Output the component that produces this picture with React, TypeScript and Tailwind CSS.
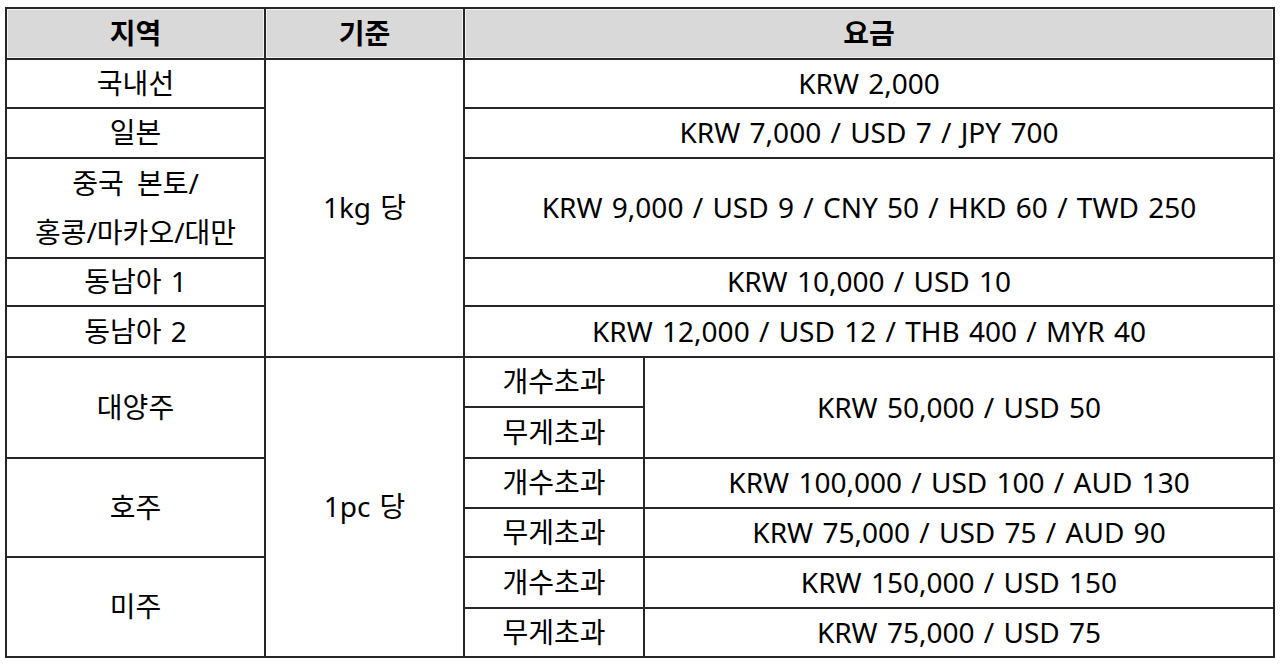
import React from "react";

const font = { fontFamily: '"Noto Sans", "Noto Sans CJK KR", sans-serif' };

export default function App() {
  const td = "border-2 border-[#262626] text-center align-middle p-0";
  return (
    <div className="w-[1280px] h-[664px] bg-white pl-[5px] pt-[7px] overflow-hidden" style={font}>
      <table className="table-fixed border-collapse w-[1268px] text-[28px] text-black leading-[1.2] [word-spacing:2px]">
        <colgroup>
          <col className="w-[259px]" />
          <col className="w-[199px]" />
          <col className="w-[180px]" />
          <col className="w-[630px]" />
        </colgroup>
        <tbody>
          <tr className="h-[51px]">
            <td className={`${td} bg-[#d9d9d9] font-bold shadow-[inset_0_0_0_1px_#f2f2f2]`}>지역</td>
            <td className={`${td} bg-[#d9d9d9] font-bold shadow-[inset_0_0_0_1px_#f2f2f2]`}>기준</td>
            <td colSpan={2} className={`${td} bg-[#d9d9d9] font-bold shadow-[inset_0_0_0_1px_#f2f2f2]`}>요금</td>
          </tr>
          <tr className="h-[49px]">
            <td className={td}>국내선</td>
            <td rowSpan={5} className={td}>1kg 당</td>
            <td colSpan={2} className={td}>KRW 2,000</td>
          </tr>
          <tr className="h-[50px]">
            <td className={td}>일본</td>
            <td colSpan={2} className={td}>KRW 7,000 / USD 7 / JPY 700</td>
          </tr>
          <tr className="h-[100px]">
            <td className={`${td} leading-[49px]`}>
              <span className="[word-spacing:6px]">중국 본토/</span>
              <br />
              홍콩/마카오/대만
            </td>
            <td colSpan={2} className={td}>KRW 9,000 / USD 9 / CNY 50 / HKD 60 / TWD 250</td>
          </tr>
          <tr className="h-[48px]">
            <td className={td}>동남아 1</td>
            <td colSpan={2} className={td}>KRW 10,000 / USD 10</td>
          </tr>
          <tr className="h-[51px]">
            <td className={td}>동남아 2</td>
            <td colSpan={2} className={td}>KRW 12,000 / USD 12 / THB 400 / MYR 40</td>
          </tr>
          <tr className="h-[50px]">
            <td rowSpan={2} className={td}>대양주</td>
            <td rowSpan={6} className={td}>1pc 당</td>
            <td className={td}>개수초과</td>
            <td rowSpan={2} className={td}>KRW 50,000 / USD 50</td>
          </tr>
          <tr className="h-[51px]">
            <td className={td}>무게초과</td>
          </tr>
          <tr className="h-[50px]">
            <td rowSpan={2} className={td}>호주</td>
            <td className={td}>개수초과</td>
            <td className={td}>KRW 100,000 / USD 100 / AUD 130</td>
          </tr>
          <tr className="h-[49px]">
            <td className={td}>무게초과</td>
            <td className={td}>KRW 75,000 / USD 75 / AUD 90</td>
          </tr>
          <tr className="h-[51px]">
            <td rowSpan={2} className={td}>미주</td>
            <td className={td}>개수초과</td>
            <td className={td}>KRW 150,000 / USD 150</td>
          </tr>
          <tr className="h-[49px]">
            <td className={td}>무게초과</td>
            <td className={td}>KRW 75,000 / USD 75</td>
          </tr>
        </tbody>
      </table>
    </div>
  );
}
